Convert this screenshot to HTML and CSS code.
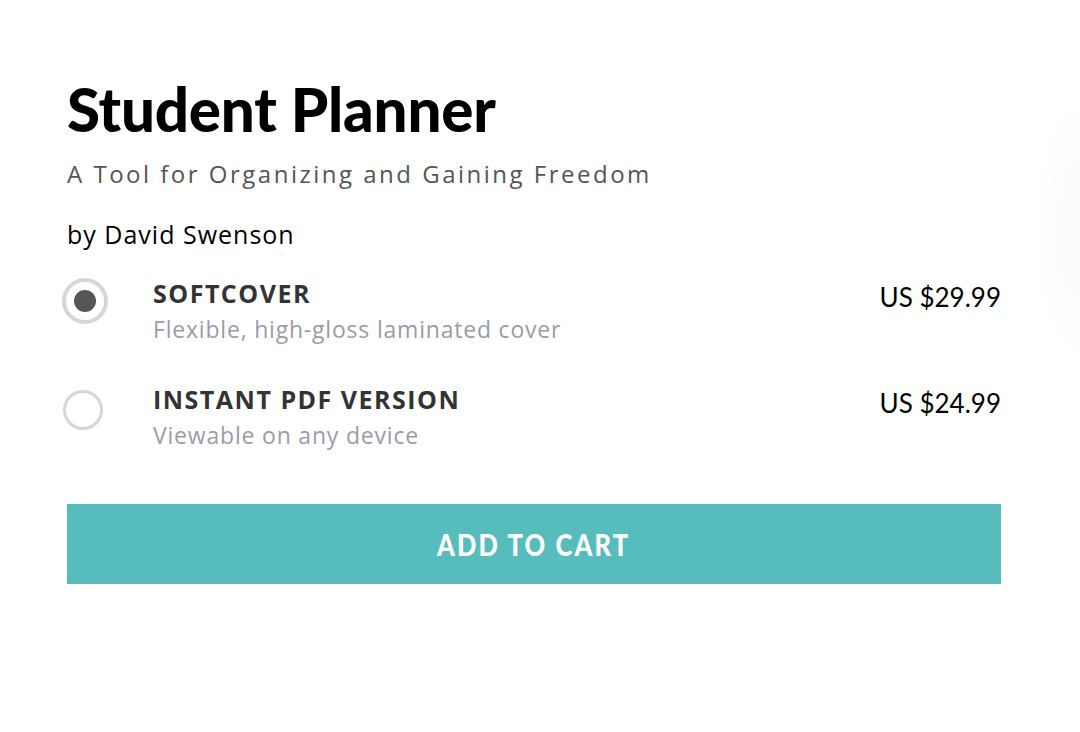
FILE: index.html
```html
<!Doctype html>
<html>
    <head>
        <link rel="stylesheet" href="styles.css">
        <title>Student Planner</title>
    </head>
    <body>
        <div class="product">
            <h1 class="title">Student Planner</h1>
            <p class="subtitle">A Tool for Organizing and Gaining Freedom</p>
            <p class="author">by David Swenson</p>

            <div class="options">
                <label class="option">
                    <span class="radio is-checked"><span class="radio-dot"></span></span>
                    <span class="option-text">
                        <span class="option-name">SOFTCOVER</span>
                        <span class="option-desc">Flexible, high-gloss laminated cover</span>
                    </span>
                    <span class="option-price">US $29.99</span>
                </label>

                <label class="option">
                    <span class="radio"></span>
                    <span class="option-text">
                        <span class="option-name">INSTANT PDF VERSION</span>
                        <span class="option-desc">Viewable on any device</span>
                    </span>
                    <span class="option-price">US $24.99</span>
                </label>
            </div>

            <button class="cart-button"><span class="cart-label">ADD TO CART</span></button>
        </div>
        <div class="edge-shadow"></div>
    </body>
</html>
```

FILE: styles.css
```css
body {
    margin: 0;
    background-color: white;
    font-family: "Open Sans", "Liberation Sans", sans-serif;
    overflow: hidden;
}

.product {
    width: 934px;
    padding-top: 74px;
    padding-left: 67px;
}

.title {
    margin: 0;
    font-family: "Lato", "Liberation Sans", sans-serif;
    font-size: 60px;
    font-weight: 900;
    line-height: 70px;
    color: black;
    letter-spacing: -0.2px;
}

.subtitle {
    margin: 14px 0 0 0;
    font-size: 24px;
    line-height: 32px;
    color: #555;
    letter-spacing: 2.5px;
}

.author {
    margin: 28px 0 0 0;
    font-size: 25px;
    line-height: 32px;
    color: black;
    letter-spacing: 1px;
}

.options {
    display: flex;
    flex-direction: column;
    gap: 34px;
    margin-top: 25px;
}

.option {
    display: flex;
    align-items: flex-start;
    cursor: pointer;
}

.radio {
    width: 40px;
    height: 40px;
    margin-top: 9px;
    margin-left: -4px;
    border: 3px solid #d6d6d6;
    border-radius: 50%;
    box-sizing: border-box;
    display: flex;
    align-items: center;
    justify-content: center;
    flex-shrink: 0;
}

.radio.is-checked {
    width: 46px;
    height: 46px;
    margin-top: 3px;
    margin-left: -5px;
    border: 4px solid #d6d6d6;
}

.radio-dot {
    width: 22px;
    height: 22px;
    border-radius: 50%;
    background-color: #555;
}

.option-text {
    display: flex;
    flex-direction: column;
    margin-left: 50px;
    flex-grow: 1;
}

.is-checked + .option-text {
    margin-left: 45px;
}

.option-name {
    font-size: 25px;
    font-weight: 700;
    color: #333;
    line-height: 36px;
    letter-spacing: 1.5px;
}

.option-desc {
    font-size: 23px;
    color: #9b9ba8;
    line-height: 36px;
    letter-spacing: 0.8px;
}

.option-price {
    font-family: "Lato", "Liberation Sans", sans-serif;
    font-size: 26px;
    color: black;
    line-height: 36px;
    margin-top: 4px;
}

.cart-button {
    display: flex;
    align-items: center;
    justify-content: center;
    width: 934px;
    height: 80px;
    margin-top: 51px;
    border: none;
    background-color: #57bdbc;
    cursor: pointer;
}

.cart-label {
    display: inline-block;
    color: white;
    font-family: "Lato", "Liberation Sans", sans-serif;
    font-size: 30px;
    font-weight: 900;
    letter-spacing: 2.5px;
    transform: scaleX(0.85);
}

.edge-shadow {
    position: absolute;
    top: 90px;
    right: 0;
    width: 50px;
    height: 280px;
    background: radial-gradient(ellipse at right center, rgba(0, 0, 0, 0.02), rgba(0, 0, 0, 0) 70%);
}
```
